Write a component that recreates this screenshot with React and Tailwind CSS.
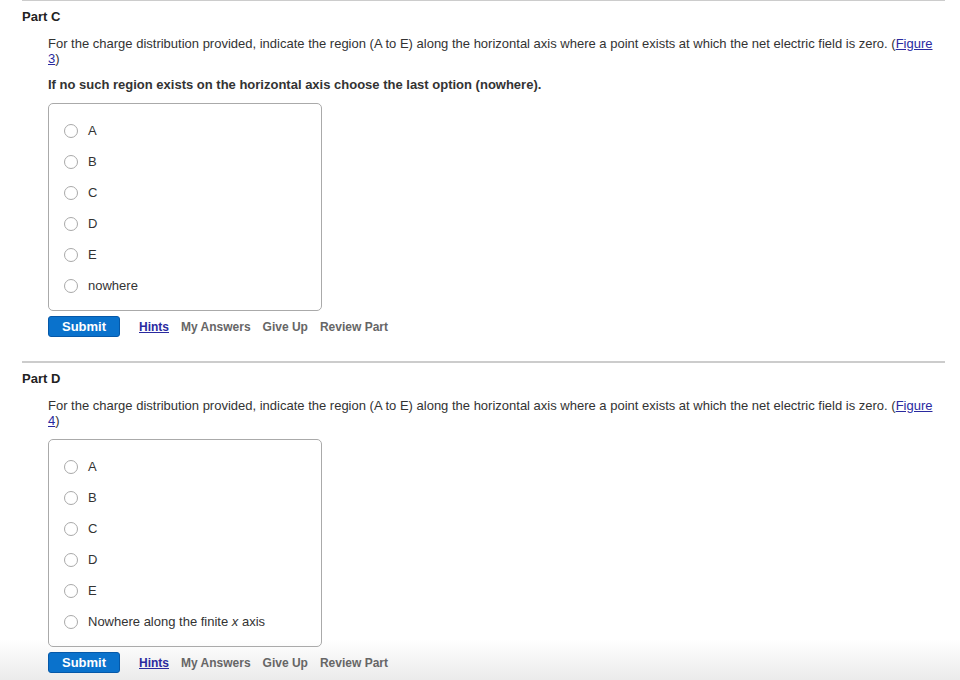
import React from 'react';

const Radio = ({ children }) => (
  <label className="flex items-center h-[31px] pl-[15px] cursor-pointer">
    <span className="w-[14px] h-[14px] rounded-full border border-[#a9a9a9] bg-white shrink-0" />
    <span className="ml-[10px] text-[13px] text-[#333]">{children}</span>
  </label>
);

const Actions = () => (
  <div className="flex items-center mt-[5px]">
    <button className="w-[72px] h-[21px] rounded-[3px] bg-[#0a72cc] border border-[#0558a8] text-white text-[13px] font-bold leading-none">
      Submit
    </button>
    <div className="flex items-center gap-3 ml-[19px] text-[12px] font-bold">
      <a className="text-[#2a2a9f] underline">Hints</a>
      <span className="text-[#666]">My Answers</span>
      <span className="text-[#666]">Give Up</span>
      <span className="text-[#666]">Review Part</span>
    </div>
  </div>
);

const Part = ({ title, figure, note, options, border }) => (
  <section className={border}>
    <h3 className="pt-[8px] text-[13px] leading-[16px] font-bold text-[#222]">{title}</h3>
    <div className="pl-[26px] pr-[10px]">
      <p className="mt-[11px] text-[13px] leading-[15px] text-[#333]">
        For the charge distribution provided, indicate the region (A to E) along the horizontal axis where a point exists at which the net electric field is zero. (
        <a className="text-[#2a2a9f] underline">Figure {figure}</a>)
      </p>
      {note && (
        <p className="mt-[11px] text-[13px] leading-[15px] font-bold text-[#333]">{note}</p>
      )}
      <div className="mt-[11px] w-[274px] h-[208px] border border-[#aaa] rounded-[5px] pt-[11px] pb-[9px]">
        {options.map((o, i) => (
          <Radio key={i}>{o}</Radio>
        ))}
      </div>
      <Actions />
    </div>
  </section>
);

export default function App() {
  return (
    <div className="relative w-[960px] h-[680px] overflow-hidden bg-[linear-gradient(to_bottom,#ffffff_640px,#ebebeb)] font-['Liberation_Sans',Arial,sans-serif]">
      <div className="ml-[22px] w-[923px]">
        <Part
          title="Part C"
          figure="3"
          note="If no such region exists on the horizontal axis choose the last option (nowhere)."
          options={['A', 'B', 'C', 'D', 'E', 'nowhere']}
          border="border-t border-[#ccc]"
        />
        <div className="mt-[24px] h-[2px] bg-[#ccc]" />
        <Part
          title="Part D"
          figure="4"
          options={[
            'A',
            'B',
            'C',
            'D',
            'E',
            <>Nowhere along the finite <i>x</i> axis</>,
          ]}
        />
      </div>
    </div>
  );
}
